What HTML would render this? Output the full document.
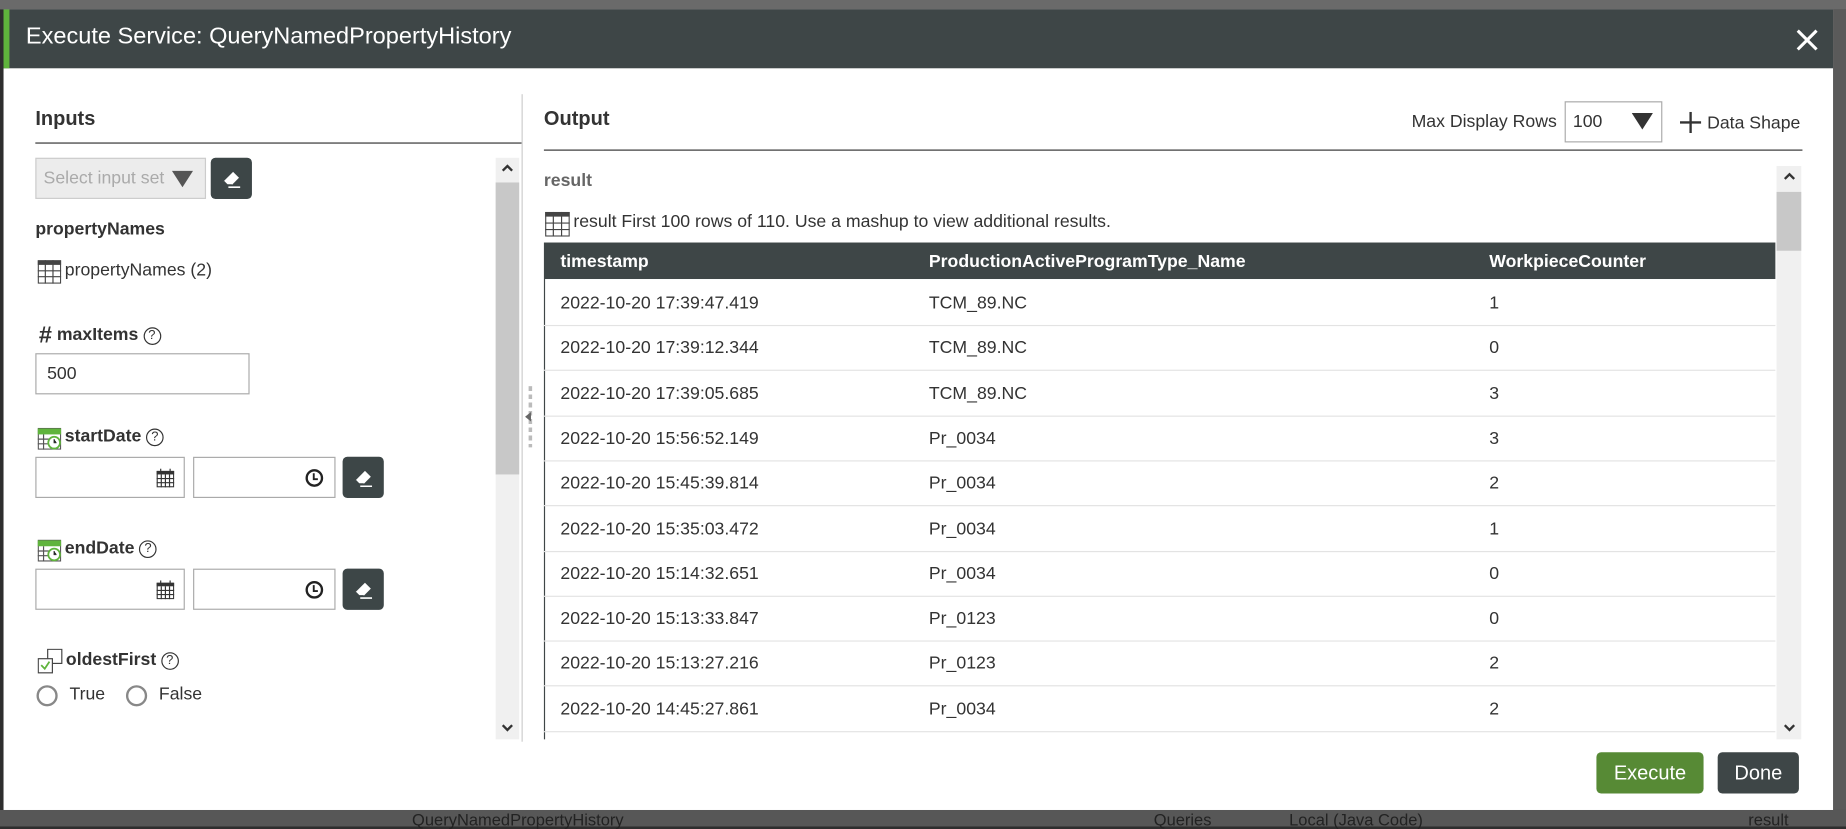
<!DOCTYPE html>
<html><head><meta charset="utf-8"><style>
html,body{margin:0;padding:0;width:1846px;height:827px;overflow:hidden;background:#2e2e2e;}
#s{position:absolute;left:0;top:0;width:1568px;height:702px;transform:scale(1.17730);transform-origin:0 0;font-family:"Liberation Sans",Arial,sans-serif;color:#333;}
.a{position:absolute;}
.b{font-weight:bold;}
.inp{position:absolute;border:1px solid #aaa;background:#fff;box-sizing:border-box;}
.btn{position:absolute;background:#3d4647;border-radius:4px;}
.q{display:inline-block;width:13px;height:13px;border:1.5px solid #333;border-radius:50%;font-size:11px;line-height:13px;text-align:center;font-weight:normal;vertical-align:1px;margin-left:4px;}
.row{position:absolute;left:462px;width:1046px;height:38px;border-bottom:1px solid #e3e3e3;font-size:15px;}
.row span{position:absolute;top:11px;}
</style></head><body><div id="s">
<!-- background -->
<div class="a" style="left:0;top:0;width:1568px;height:8px;background:#6a6a6a"></div>
<div class="a" style="left:1557px;top:8px;width:11px;height:680px;background:#5a5a5a"></div>
<div class="a" style="left:0;top:688px;width:1568px;height:14px;background:#575757"></div>
<div class="a" style="left:350px;top:688px;font-size:14px;color:#222;">QueryNamedPropertyHistory</div>
<div class="a" style="left:980px;top:688px;font-size:14px;color:#222;">Queries</div>
<div class="a" style="left:1095px;top:688px;font-size:14px;color:#222;">Local (Java Code)</div>
<div class="a" style="left:1485px;top:688px;font-size:14px;color:#222;">result</div>
<!-- modal -->
<div class="a" style="left:3px;top:8px;width:1554px;height:680px;background:#fff"></div>
<div class="a" style="left:3px;top:8px;width:1554px;height:50px;background:#3e4647"></div>
<div class="a" style="left:3px;top:8px;width:5px;height:50px;background:#5fb43c"></div>
<div class="a" style="left:22px;top:20px;font-size:20px;color:#fff;">Execute Service: QueryNamedPropertyHistory</div>
<svg class="a" style="left:1525px;top:24px" width="20" height="20"><path d="M2 2L18 18M18 2L2 18" stroke="#fff" stroke-width="2.6"/></svg>
<!-- inputs -->
<div class="a b" style="left:30px;top:91px;font-size:17px;">Inputs</div>
<div class="a" style="left:30px;top:121px;width:413px;height:1px;background:#333"></div>
<div class="a" style="left:443px;top:80px;width:1px;height:550px;background:#ccc"></div>
<div class="a" style="left:421px;top:134px;width:20px;height:494px;background:#f0f0f0"></div>
<div class="a" style="left:421px;top:155px;width:20px;height:248px;background:#c8c8c8"></div>
<svg class="a" style="left:425px;top:138px" width="12" height="10"><path d="M2 7L6 3L10 7" stroke="#333" stroke-width="2" fill="none"/></svg>
<svg class="a" style="left:425px;top:613px" width="12" height="10"><path d="M2 3L6 7L10 3" stroke="#333" stroke-width="2" fill="none"/></svg>
<div class="inp" style="left:30px;top:134px;width:145px;height:35px;background:#ececec;border-color:#ccc;"></div>
<div class="a" style="left:37px;top:143px;font-size:15px;color:#aaa;">Select input set</div>
<svg class="a" style="left:146px;top:145px" width="18" height="14"><path d="M0 0H18L9 14Z" fill="#555"/></svg>
<div class="btn" style="left:179px;top:134px;width:35px;height:35px;"></div>
<svg class="a" style="left:186px;top:141px" width="22" height="22"><path d="M4 13L12 5L17 10L11 16H7Z" fill="#fff"/><path d="M4 13L7 16H11" stroke="#3d4647" fill="none"/><path d="M8 18H18" stroke="#fff" stroke-width="1.3"/></svg>
<div class="a b" style="left:30px;top:186px;font-size:15px;">propertyNames</div>
<svg class="a" style="left:32px;top:221px" width="20" height="20"><rect x="0.5" y="0.5" width="19" height="19" fill="#fff" stroke="#444"/><rect x="0" y="0" width="20" height="4" fill="#444"/><path d="M0 9H20M0 14H20M6.5 0V20M13 0V20" stroke="#444"/></svg>
<div class="a" style="left:55px;top:221px;font-size:15px;">propertyNames (2)</div>
<div class="a b" style="left:33px;top:274px;font-size:15px;"><span style="font-size:20px;vertical-align:-2px">#</span> maxItems<span class="q">?</span></div>
<div class="inp" style="left:30px;top:300px;width:182px;height:35px;"></div>
<div class="a" style="left:40px;top:309px;font-size:15px;">500</div>
<!-- startDate -->
<svg class="a" style="left:32px;top:362px" width="20" height="20"><rect x="0.5" y="2" width="19" height="17.5" fill="#fff" stroke="#555"/><rect x="0" y="2" width="20" height="5" fill="#5fb43c"/><path d="M0 11H10M0 15H10M5 7V20" stroke="#555"/><circle cx="14" cy="14" r="5" fill="#fff" stroke="#5fb43c" stroke-width="1.5"/><path d="M14 11V14H16" stroke="#333"/></svg>
<div class="a b" style="left:55px;top:362px;font-size:15px;">startDate<span class="q">?</span></div>
<div class="inp" style="left:30px;top:388px;width:127px;height:35px;"></div>
<div class="inp" style="left:164px;top:388px;width:121px;height:35px;"></div>
<div class="btn" style="left:291px;top:388px;width:35px;height:35px;"></div>
<!-- endDate -->
<svg class="a" style="left:32px;top:457px" width="20" height="20"><rect x="0.5" y="2" width="19" height="17.5" fill="#fff" stroke="#555"/><rect x="0" y="2" width="20" height="5" fill="#5fb43c"/><path d="M0 11H10M0 15H10M5 7V20" stroke="#555"/><circle cx="14" cy="14" r="5" fill="#fff" stroke="#5fb43c" stroke-width="1.5"/><path d="M14 11V14H16" stroke="#333"/></svg>
<div class="a b" style="left:55px;top:457px;font-size:15px;">endDate<span class="q">?</span></div>
<div class="inp" style="left:30px;top:483px;width:127px;height:35px;"></div>
<div class="inp" style="left:164px;top:483px;width:121px;height:35px;"></div>
<div class="btn" style="left:291px;top:483px;width:35px;height:35px;"></div>
<!-- icons in date inputs -->
<svg class="a" style="left:133px;top:398px" width="15" height="16"><rect x="0.5" y="2.5" width="14" height="13" fill="#fff" stroke="#333"/><rect x="0" y="2" width="15" height="3" fill="#333"/><path d="M0 8.5H15M0 12H15M4 5V16M7.5 5V16M11 5V16M3.5 0V3M11.5 0V3" stroke="#333"/></svg>
<svg class="a" style="left:133px;top:493px" width="15" height="16"><rect x="0.5" y="2.5" width="14" height="13" fill="#fff" stroke="#333"/><rect x="0" y="2" width="15" height="3" fill="#333"/><path d="M0 8.5H15M0 12H15M4 5V16M7.5 5V16M11 5V16M3.5 0V3M11.5 0V3" stroke="#333"/></svg>
<svg class="a" style="left:259px;top:398px" width="16" height="16"><circle cx="8" cy="8" r="6.5" fill="none" stroke="#222" stroke-width="2"/><path d="M7.5 4V9H11" stroke="#222" stroke-width="1.6" fill="none"/></svg>
<svg class="a" style="left:259px;top:493px" width="16" height="16"><circle cx="8" cy="8" r="6.5" fill="none" stroke="#222" stroke-width="2"/><path d="M7.5 4V9H11" stroke="#222" stroke-width="1.6" fill="none"/></svg>
<svg class="a" style="left:298px;top:395px" width="22" height="22"><path d="M4 13L12 5L17 10L11 16H7Z" fill="#fff"/><path d="M4 13L7 16H11" stroke="#3d4647" fill="none"/><path d="M8 18H18" stroke="#fff" stroke-width="1.3"/></svg>
<svg class="a" style="left:298px;top:490px" width="22" height="22"><path d="M4 13L12 5L17 10L11 16H7Z" fill="#fff"/><path d="M4 13L7 16H11" stroke="#3d4647" fill="none"/><path d="M8 18H18" stroke="#fff" stroke-width="1.3"/></svg>
<!-- oldestFirst -->
<svg class="a" style="left:32px;top:551px" width="22" height="22"><rect x="8.5" y="0.5" width="12" height="12" fill="#fff" stroke="#444"/><rect x="0.5" y="8.5" width="12" height="12" fill="#fff" stroke="#444"/><path d="M3 14L6 17L10 11" stroke="#5fb43c" stroke-width="1.5" fill="none"/></svg>
<div class="a b" style="left:56px;top:552px;font-size:15px;">oldestFirst<span class="q">?</span></div>
<div class="a" style="left:31px;top:582px;width:14px;height:14px;border:2px solid #888;border-radius:50%;"></div>
<div class="a" style="left:59px;top:581px;font-size:15px;">True</div>
<div class="a" style="left:107px;top:582px;width:14px;height:14px;border:2px solid #888;border-radius:50%;"></div>
<div class="a" style="left:135px;top:581px;font-size:15px;">False</div>
<!-- splitter -->
<div class="a" style="left:449px;top:328px;width:3px;height:52px;background:repeating-linear-gradient(#bbb 0 4px,transparent 4px 7px);"></div>
<svg class="a" style="left:446px;top:350px" width="6" height="8"><path d="M5 0V8L0 4Z" fill="#666"/></svg>
<!-- output -->
<div class="a b" style="left:462px;top:91px;font-size:17px;">Output</div>
<div class="a" style="left:1199px;top:95px;font-size:15px;">Max Display Rows</div>
<div class="inp" style="left:1329px;top:86px;width:83px;height:35px;"></div>
<div class="a" style="left:1336px;top:95px;font-size:15px;">100</div>
<svg class="a" style="left:1386px;top:96px" width="18" height="14"><path d="M0 0H18L9 14Z" fill="#333"/></svg>
<svg class="a" style="left:1427px;top:95px" width="18" height="18"><path d="M9 0V18M0 9H18" stroke="#333" stroke-width="2"/></svg>
<div class="a" style="left:1450px;top:96px;font-size:15px;">Data Shape</div>
<div class="a" style="left:462px;top:127px;width:1069px;height:1px;background:#333"></div>
<div class="a b" style="left:462px;top:145px;font-size:15px;color:#666;">result</div>
<svg class="a" style="left:463px;top:180px" width="21" height="21"><rect x="0.5" y="0.5" width="20" height="20" fill="#fff" stroke="#444"/><rect x="0" y="0" width="21" height="4" fill="#444"/><path d="M0 9.5H21M0 15H21M7 0V21M14 0V21" stroke="#444"/></svg>
<div class="a" style="left:487px;top:180px;font-size:15px;">result First 100 rows of 110. Use a mashup to view additional results.</div>
<div class="a" style="left:1509px;top:141px;width:21px;height:487px;background:#f0f0f0"></div>
<div class="a" style="left:1509px;top:163px;width:21px;height:50px;background:#c8c8c8"></div>
<svg class="a" style="left:1514px;top:145px" width="12" height="10"><path d="M2 7L6 3L10 7" stroke="#333" stroke-width="2" fill="none"/></svg>
<svg class="a" style="left:1514px;top:613px" width="12" height="10"><path d="M2 3L6 7L10 3" stroke="#333" stroke-width="2" fill="none"/></svg>
<div class="a" style="left:462px;top:206px;width:1046px;height:31px;background:#3e4647;color:#fff;font-size:15px;font-weight:bold;">
<span class="a" style="left:14px;top:8px">timestamp</span><span class="a" style="left:327px;top:8px">ProductionActiveProgramType_Name</span><span class="a" style="left:803px;top:8px">WorkpieceCounter</span></div>
<div class="a" style="left:462px;top:237px;width:1px;height:391px;background:#3e4647"></div>
<div style="position:absolute;left:0;top:0;">
<div class="row" style="top:238px"><span style="left:14px">2022-10-20 17:39:47.419</span><span style="left:327px">TCM_89.NC</span><span style="left:803px">1</span></div>
<div class="row" style="top:276.3px"><span style="left:14px">2022-10-20 17:39:12.344</span><span style="left:327px">TCM_89.NC</span><span style="left:803px">0</span></div>
<div class="row" style="top:314.6px"><span style="left:14px">2022-10-20 17:39:05.685</span><span style="left:327px">TCM_89.NC</span><span style="left:803px">3</span></div>
<div class="row" style="top:352.9px"><span style="left:14px">2022-10-20 15:56:52.149</span><span style="left:327px">Pr_0034</span><span style="left:803px">3</span></div>
<div class="row" style="top:391.2px"><span style="left:14px">2022-10-20 15:45:39.814</span><span style="left:327px">Pr_0034</span><span style="left:803px">2</span></div>
<div class="row" style="top:429.5px"><span style="left:14px">2022-10-20 15:35:03.472</span><span style="left:327px">Pr_0034</span><span style="left:803px">1</span></div>
<div class="row" style="top:467.8px"><span style="left:14px">2022-10-20 15:14:32.651</span><span style="left:327px">Pr_0034</span><span style="left:803px">0</span></div>
<div class="row" style="top:506.1px"><span style="left:14px">2022-10-20 15:13:33.847</span><span style="left:327px">Pr_0123</span><span style="left:803px">0</span></div>
<div class="row" style="top:544.4px"><span style="left:14px">2022-10-20 15:13:27.216</span><span style="left:327px">Pr_0123</span><span style="left:803px">2</span></div>
<div class="row" style="top:582.7px"><span style="left:14px">2022-10-20 14:45:27.861</span><span style="left:327px">Pr_0034</span><span style="left:803px">2</span></div>
</div>
<div class="a" style="left:1356px;top:639px;width:91px;height:35px;background:#578a35;border-radius:4px;color:#fff;font-size:17px;text-align:center;line-height:35px;">Execute</div>
<div class="a" style="left:1459px;top:639px;width:69px;height:35px;background:#3e4647;border-radius:4px;color:#fff;font-size:17px;text-align:center;line-height:35px;">Done</div>
</div></body></html>
